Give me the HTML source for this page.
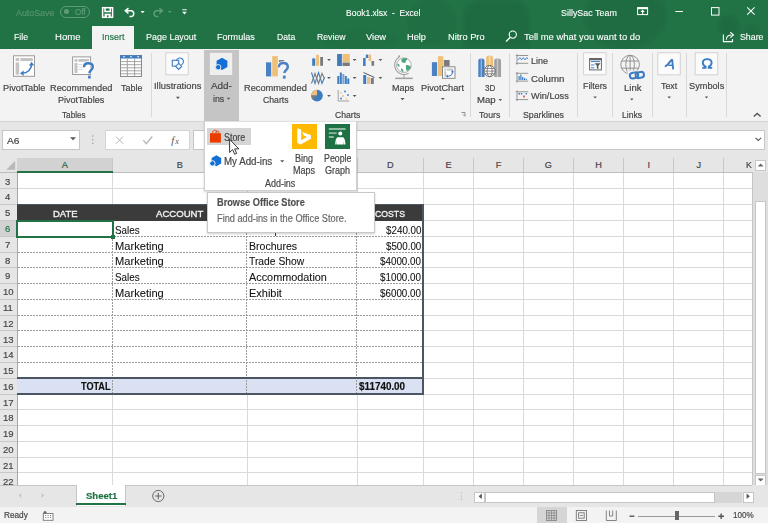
<!DOCTYPE html><html><head><meta charset="utf-8"><style>
html,body{margin:0;padding:0;width:768px;height:523px;overflow:hidden;background:#fff}
body>div,body>svg,body>span{position:absolute}
span{font-family:"Liberation Sans",sans-serif;line-height:1;white-space:pre;transform-origin:0 0;-webkit-text-stroke:0.18px currentColor}
</style></head><body>
<div style="left:0px;top:0px;width:768px;height:49px;background:#217346"></div>
<div style="left:0px;top:49px;width:768px;height:72px;background:#f3f3f3"></div>
<div style="left:0px;top:121px;width:768px;height:1px;background:#d4d4d4"></div>
<div style="left:0px;top:122px;width:768px;height:36px;background:#e6e6e6"></div>
<svg style="left:0;top:0" width="768" height="523" viewBox="0 0 768 523"><defs><filter id="bl" x="-50%" y="-50%" width="200%" height="200%"><feGaussianBlur stdDeviation="2"/></filter><clipPath id="tb"><rect x="0" y="0" width="768" height="49"/></clipPath></defs><g fill="#000" filter="url(#bl)" clip-path="url(#tb)"><path d="M463 49V20a18 18 0 0 1 18-20h32a18 18 0 0 1 17 20v29z" fill-opacity="0.065"/><ellipse cx="432" cy="22" rx="26" ry="24" fill-opacity="0.035"/><ellipse cx="625" cy="16" rx="42" ry="34" fill-opacity="0.06"/><circle cx="729" cy="26" r="11" fill-opacity="0.07"/><circle cx="752" cy="31" r="8" fill-opacity="0.05"/><ellipse cx="360" cy="40" rx="40" ry="12" fill-opacity="0.025"/></g></svg>
<div style="left:92px;top:26px;width:42px;height:23px;background:#f3f3f3"></div>
<span style="left:15.60px;top:8.78px;font-size:9px;font-weight:400;color:#57926f;transform:scaleX(0.9838)">AutoSave</span>
<div style="left:60px;top:5.5px;width:30px;height:12px;border:1px solid #5e9c79;border-radius:7px;box-sizing:border-box"></div>
<div style="left:64px;top:9px;width:5px;height:5px;background:#5e9c79;border-radius:50%"></div>
<span style="left:75.00px;top:8.30px;font-size:8.5px;font-weight:400;color:#5e9c79;transform:scaleX(0.9385)">Off</span>
<span style="left:345.50px;top:8.78px;font-size:9px;font-weight:400;color:#fff;-webkit-text-stroke:0.1px currentColor;transform:scaleX(0.9487)">Book1.xlsx  -  Excel</span>
<span style="left:561.40px;top:8.78px;font-size:9px;font-weight:400;color:#fff;-webkit-text-stroke:0.1px currentColor;transform:scaleX(0.9918)">SillySac Team</span>
<span style="left:13.50px;top:33.43px;font-size:9.3px;font-weight:400;color:#fff;-webkit-text-stroke:0.1px currentColor;transform:scaleX(0.9343)">File</span>
<span style="left:55.00px;top:33.43px;font-size:9.3px;font-weight:400;color:#fff;-webkit-text-stroke:0.1px currentColor;transform:scaleX(1.0277)">Home</span>
<span style="left:145.60px;top:33.43px;font-size:9.3px;font-weight:400;color:#fff;-webkit-text-stroke:0.1px currentColor;transform:scaleX(0.9633)">Page Layout</span>
<span style="left:217.20px;top:33.43px;font-size:9.3px;font-weight:400;color:#fff;-webkit-text-stroke:0.1px currentColor;transform:scaleX(0.9755)">Formulas</span>
<span style="left:276.60px;top:33.43px;font-size:9.3px;font-weight:400;color:#fff;-webkit-text-stroke:0.1px currentColor;transform:scaleX(0.9267)">Data</span>
<span style="left:316.50px;top:33.43px;font-size:9.3px;font-weight:400;color:#fff;-webkit-text-stroke:0.1px currentColor;transform:scaleX(0.9349)">Review</span>
<span style="left:365.90px;top:33.43px;font-size:9.3px;font-weight:400;color:#fff;-webkit-text-stroke:0.1px currentColor;transform:scaleX(1.0058)">View</span>
<span style="left:406.90px;top:33.43px;font-size:9.3px;font-weight:400;color:#fff;-webkit-text-stroke:0.1px currentColor;transform:scaleX(0.9882)">Help</span>
<span style="left:447.60px;top:33.43px;font-size:9.3px;font-weight:400;color:#fff;-webkit-text-stroke:0.1px currentColor;transform:scaleX(0.9976)">Nitro Pro</span>
<span style="left:523.70px;top:33.43px;font-size:9.3px;font-weight:400;color:#fff;-webkit-text-stroke:0.1px currentColor;transform:scaleX(1.0136)">Tell me what you want to do</span>
<span style="left:740.00px;top:33.43px;font-size:9.3px;font-weight:400;color:#fff;-webkit-text-stroke:0.1px currentColor;transform:scaleX(0.9471)">Share</span>
<span style="left:101.50px;top:33.43px;font-size:9.3px;font-weight:400;color:#217346;transform:scaleX(0.9671)">Insert</span>
<span style="left:2.75px;top:83.78px;font-size:9px;font-weight:400;color:#444;transform:scaleX(1.0221)">PivotTable</span>
<span style="left:49.60px;top:83.78px;font-size:9px;font-weight:400;color:#444;transform:scaleX(1.0224)">Recommended</span>
<span style="left:57.80px;top:96.18px;font-size:9px;font-weight:400;color:#444;transform:scaleX(1.0037)">PivotTables</span>
<span style="left:120.60px;top:83.78px;font-size:9px;font-weight:400;color:#444;transform:scaleX(0.9946)">Table</span>
<span style="left:61.70px;top:110.78px;font-size:9px;font-weight:400;color:#444;transform:scaleX(0.9110)">Tables</span>
<span style="left:153.60px;top:81.78px;font-size:9px;font-weight:400;color:#444;transform:scaleX(1.0410)">Illustrations</span>
<div style="left:204px;top:50px;width:34.5px;height:71px;background:#c5c5c5"></div>
<span style="left:210.60px;top:82.38px;font-size:9px;font-weight:400;color:#444;transform:scaleX(1.0991)">Add-</span>
<span style="left:212.50px;top:94.78px;font-size:9px;font-weight:400;color:#444;transform:scaleX(0.9813)">ins</span>
<span style="left:243.70px;top:83.78px;font-size:9px;font-weight:400;color:#444;transform:scaleX(1.0290)">Recommended</span>
<span style="left:262.70px;top:96.18px;font-size:9px;font-weight:400;color:#444;transform:scaleX(0.9617)">Charts</span>
<span style="left:335.00px;top:110.78px;font-size:9px;font-weight:400;color:#444;transform:scaleX(0.9579)">Charts</span>
<span style="left:391.50px;top:83.78px;font-size:9px;font-weight:400;color:#444;transform:scaleX(1.0038)">Maps</span>
<span style="left:420.90px;top:83.78px;font-size:9px;font-weight:400;color:#444;transform:scaleX(1.0230)">PivotChart</span>
<span style="left:484.70px;top:83.78px;font-size:9px;font-weight:400;color:#444;transform:scaleX(0.8944)">3D</span>
<span style="left:477.40px;top:96.18px;font-size:9px;font-weight:400;color:#444;transform:scaleX(1.0619)">Map</span>
<span style="left:478.75px;top:110.78px;font-size:9px;font-weight:400;color:#444;transform:scaleX(0.9652)">Tours</span>
<span style="left:530.80px;top:56.68px;font-size:9px;font-weight:400;color:#444;transform:scaleX(0.9991)">Line</span>
<span style="left:530.80px;top:74.88px;font-size:9px;font-weight:400;color:#444;transform:scaleX(1.0769)">Column</span>
<span style="left:530.80px;top:92.28px;font-size:9px;font-weight:400;color:#444;transform:scaleX(1.0212)">Win/Loss</span>
<span style="left:523.00px;top:110.78px;font-size:9px;font-weight:400;color:#444;transform:scaleX(0.9755)">Sparklines</span>
<span style="left:583.00px;top:81.78px;font-size:9px;font-weight:400;color:#444;transform:scaleX(0.9796)">Filters</span>
<span style="left:623.50px;top:83.78px;font-size:9px;font-weight:400;color:#444;transform:scaleX(1.0596)">Link</span>
<span style="left:622.20px;top:110.78px;font-size:9px;font-weight:400;color:#444;transform:scaleX(0.9517)">Links</span>
<span style="left:661.20px;top:81.78px;font-size:9px;font-weight:400;color:#444;transform:scaleX(0.9809)">Text</span>
<span style="left:689.00px;top:81.78px;font-size:9px;font-weight:400;color:#444;transform:scaleX(1.0213)">Symbols</span>
<div style="left:151px;top:53px;width:1px;height:64px;background:#d8d8d8"></div>
<div style="left:470px;top:53px;width:1px;height:64px;background:#d8d8d8"></div>
<div style="left:509px;top:53px;width:1px;height:64px;background:#d8d8d8"></div>
<div style="left:577px;top:53px;width:1px;height:64px;background:#d8d8d8"></div>
<div style="left:612px;top:53px;width:1px;height:64px;background:#d8d8d8"></div>
<div style="left:652px;top:53px;width:1px;height:64px;background:#d8d8d8"></div>
<div style="left:686px;top:53px;width:1px;height:64px;background:#d8d8d8"></div>
<div style="left:726px;top:53px;width:1px;height:64px;background:#d8d8d8"></div>
<div style="left:2px;top:130px;width:78px;height:20px;background:#fff;border:1px solid #c6c6c6;box-sizing:border-box"></div>
<span style="left:7.00px;top:135.76px;font-size:9.5px;font-weight:400;color:#444;transform:scaleX(1.0753)">A6</span>
<div style="left:105px;top:130px;width:85px;height:20px;background:#fff;border:1px solid #d4d4d4;box-sizing:border-box"></div>
<div style="left:193px;top:130px;width:571.5px;height:20px;background:#fff;border:1px solid #c6c6c6;box-sizing:border-box"></div>
<div style="left:0px;top:158px;width:768px;height:15px;background:#e6e6e6"></div>
<div style="left:17px;top:158px;width:95.5px;height:14px;background:#d2d2d2"></div>
<div style="left:0px;top:173px;width:17px;height:312px;background:#e6e6e6"></div>
<div style="left:0px;top:220px;width:17px;height:17px;background:#d2d2d2"></div>
<div style="left:17px;top:173px;width:735px;height:312px;background:#fff"></div>
<div style="left:112px;top:173px;width:1px;height:312px;background:#dadada"></div>
<div style="left:112px;top:158px;width:1px;height:14px;background:#c8c8c8"></div>
<div style="left:247px;top:173px;width:1px;height:312px;background:#dadada"></div>
<div style="left:247px;top:158px;width:1px;height:14px;background:#c8c8c8"></div>
<div style="left:357px;top:173px;width:1px;height:312px;background:#dadada"></div>
<div style="left:357px;top:158px;width:1px;height:14px;background:#c8c8c8"></div>
<div style="left:423px;top:173px;width:1px;height:312px;background:#dadada"></div>
<div style="left:423px;top:158px;width:1px;height:14px;background:#c8c8c8"></div>
<div style="left:473px;top:173px;width:1px;height:312px;background:#dadada"></div>
<div style="left:473px;top:158px;width:1px;height:14px;background:#c8c8c8"></div>
<div style="left:523px;top:173px;width:1px;height:312px;background:#dadada"></div>
<div style="left:523px;top:158px;width:1px;height:14px;background:#c8c8c8"></div>
<div style="left:573px;top:173px;width:1px;height:312px;background:#dadada"></div>
<div style="left:573px;top:158px;width:1px;height:14px;background:#c8c8c8"></div>
<div style="left:623px;top:173px;width:1px;height:312px;background:#dadada"></div>
<div style="left:623px;top:158px;width:1px;height:14px;background:#c8c8c8"></div>
<div style="left:673px;top:173px;width:1px;height:312px;background:#dadada"></div>
<div style="left:673px;top:158px;width:1px;height:14px;background:#c8c8c8"></div>
<div style="left:723px;top:173px;width:1px;height:312px;background:#dadada"></div>
<div style="left:723px;top:158px;width:1px;height:14px;background:#c8c8c8"></div>
<div style="left:752px;top:172px;width:1px;height:313px;background:#c6c6c6"></div>
<div style="left:17px;top:188px;width:735px;height:1px;background:#dadada"></div>
<div style="left:0px;top:188px;width:17px;height:1px;background:#c8c8c8"></div>
<div style="left:17px;top:204px;width:735px;height:1px;background:#dadada"></div>
<div style="left:0px;top:204px;width:17px;height:1px;background:#c8c8c8"></div>
<div style="left:17px;top:220px;width:735px;height:1px;background:#dadada"></div>
<div style="left:0px;top:220px;width:17px;height:1px;background:#c8c8c8"></div>
<div style="left:17px;top:236px;width:735px;height:1px;background:#dadada"></div>
<div style="left:0px;top:236px;width:17px;height:1px;background:#c8c8c8"></div>
<div style="left:17px;top:252px;width:735px;height:1px;background:#dadada"></div>
<div style="left:0px;top:252px;width:17px;height:1px;background:#c8c8c8"></div>
<div style="left:17px;top:267px;width:735px;height:1px;background:#dadada"></div>
<div style="left:0px;top:267px;width:17px;height:1px;background:#c8c8c8"></div>
<div style="left:17px;top:283px;width:735px;height:1px;background:#dadada"></div>
<div style="left:0px;top:283px;width:17px;height:1px;background:#c8c8c8"></div>
<div style="left:17px;top:299px;width:735px;height:1px;background:#dadada"></div>
<div style="left:0px;top:299px;width:17px;height:1px;background:#c8c8c8"></div>
<div style="left:17px;top:315px;width:735px;height:1px;background:#dadada"></div>
<div style="left:0px;top:315px;width:17px;height:1px;background:#c8c8c8"></div>
<div style="left:17px;top:330px;width:735px;height:1px;background:#dadada"></div>
<div style="left:0px;top:330px;width:17px;height:1px;background:#c8c8c8"></div>
<div style="left:17px;top:346px;width:735px;height:1px;background:#dadada"></div>
<div style="left:0px;top:346px;width:17px;height:1px;background:#c8c8c8"></div>
<div style="left:17px;top:362px;width:735px;height:1px;background:#dadada"></div>
<div style="left:0px;top:362px;width:17px;height:1px;background:#c8c8c8"></div>
<div style="left:17px;top:378px;width:735px;height:1px;background:#dadada"></div>
<div style="left:0px;top:378px;width:17px;height:1px;background:#c8c8c8"></div>
<div style="left:17px;top:394px;width:735px;height:1px;background:#dadada"></div>
<div style="left:0px;top:394px;width:17px;height:1px;background:#c8c8c8"></div>
<div style="left:17px;top:409px;width:735px;height:1px;background:#dadada"></div>
<div style="left:0px;top:409px;width:17px;height:1px;background:#c8c8c8"></div>
<div style="left:17px;top:425px;width:735px;height:1px;background:#dadada"></div>
<div style="left:0px;top:425px;width:17px;height:1px;background:#c8c8c8"></div>
<div style="left:17px;top:441px;width:735px;height:1px;background:#dadada"></div>
<div style="left:0px;top:441px;width:17px;height:1px;background:#c8c8c8"></div>
<div style="left:17px;top:457px;width:735px;height:1px;background:#dadada"></div>
<div style="left:0px;top:457px;width:17px;height:1px;background:#c8c8c8"></div>
<div style="left:17px;top:472px;width:735px;height:1px;background:#dadada"></div>
<div style="left:0px;top:472px;width:17px;height:1px;background:#c8c8c8"></div>
<div style="left:0px;top:172px;width:752px;height:1px;background:#bdbdbd"></div>
<div style="left:17px;top:171px;width:95.5px;height:2px;background:#217346"></div>
<div style="left:17px;top:173px;width:1px;height:312px;background:#a9a9a9"></div>
<span style="left:61.68px;top:161.11px;font-size:9.2px;font-weight:400;color:#1d5f3b;transform:scaleX(1.0000)">A</span>
<span style="left:176.68px;top:161.11px;font-size:9.2px;font-weight:400;color:#444;transform:scaleX(1.0000)">B</span>
<span style="left:386.88px;top:161.11px;font-size:9.2px;font-weight:400;color:#444;transform:scaleX(1.0000)">D</span>
<span style="left:445.38px;top:161.11px;font-size:9.2px;font-weight:400;color:#444;transform:scaleX(1.0000)">E</span>
<span style="left:495.64px;top:161.11px;font-size:9.2px;font-weight:400;color:#444;transform:scaleX(1.0000)">F</span>
<span style="left:544.87px;top:161.11px;font-size:9.2px;font-weight:400;color:#444;transform:scaleX(1.0000)">G</span>
<span style="left:595.23px;top:161.11px;font-size:9.2px;font-weight:400;color:#444;transform:scaleX(1.0000)">H</span>
<span style="left:647.42px;top:161.11px;font-size:9.2px;font-weight:400;color:#444;transform:scaleX(1.0000)">I</span>
<span style="left:696.55px;top:161.11px;font-size:9.2px;font-weight:400;color:#444;transform:scaleX(1.0000)">J</span>
<span style="left:745.70px;top:161.11px;font-size:9.2px;font-weight:400;color:#444;transform:scaleX(0.9445)">K</span>
<span style="left:4.96px;top:176.70px;font-size:9.8px;font-weight:400;color:#444;transform:scaleX(0.9700)">3</span>
<span style="left:4.96px;top:192.48px;font-size:9.8px;font-weight:400;color:#444;transform:scaleX(0.9700)">4</span>
<span style="left:4.96px;top:208.26px;font-size:9.8px;font-weight:400;color:#444;transform:scaleX(0.9700)">5</span>
<span style="left:4.96px;top:224.04px;font-size:9.8px;font-weight:400;color:#217346;transform:scaleX(0.9700)">6</span>
<span style="left:4.96px;top:239.82px;font-size:9.8px;font-weight:400;color:#444;transform:scaleX(0.9700)">7</span>
<span style="left:4.96px;top:255.60px;font-size:9.8px;font-weight:400;color:#444;transform:scaleX(0.9700)">8</span>
<span style="left:4.96px;top:271.38px;font-size:9.8px;font-weight:400;color:#444;transform:scaleX(0.9700)">9</span>
<span style="left:2.71px;top:287.16px;font-size:9.8px;font-weight:400;color:#444;transform:scaleX(0.9700)">10</span>
<span style="left:3.07px;top:302.94px;font-size:9.8px;font-weight:400;color:#444;transform:scaleX(0.9700)">11</span>
<span style="left:2.71px;top:318.72px;font-size:9.8px;font-weight:400;color:#444;transform:scaleX(0.9700)">12</span>
<span style="left:2.71px;top:334.50px;font-size:9.8px;font-weight:400;color:#444;transform:scaleX(0.9700)">13</span>
<span style="left:2.71px;top:350.28px;font-size:9.8px;font-weight:400;color:#444;transform:scaleX(0.9700)">14</span>
<span style="left:2.71px;top:366.06px;font-size:9.8px;font-weight:400;color:#444;transform:scaleX(0.9700)">15</span>
<span style="left:2.71px;top:381.84px;font-size:9.8px;font-weight:400;color:#444;transform:scaleX(0.9700)">16</span>
<span style="left:2.71px;top:397.62px;font-size:9.8px;font-weight:400;color:#444;transform:scaleX(0.9700)">17</span>
<span style="left:2.71px;top:413.40px;font-size:9.8px;font-weight:400;color:#444;transform:scaleX(0.9700)">18</span>
<span style="left:2.71px;top:429.18px;font-size:9.8px;font-weight:400;color:#444;transform:scaleX(0.9700)">19</span>
<span style="left:2.71px;top:444.96px;font-size:9.8px;font-weight:400;color:#444;transform:scaleX(0.9700)">20</span>
<span style="left:2.71px;top:460.74px;font-size:9.8px;font-weight:400;color:#444;transform:scaleX(0.9700)">21</span>
<span style="left:2.71px;top:476.52px;font-size:9.8px;font-weight:400;color:#444;transform:scaleX(0.9700)">22</span>
<div style="left:17px;top:204px;width:406px;height:17px;background:#3b3b3b"></div>
<div style="left:17px;top:204px;width:406px;height:1px;background:#4b5563"></div>
<div style="left:18px;top:221px;width:405px;height:157px;background:#fff"></div>
<div style="left:17px;top:378px;width:406px;height:16px;background:#d9e1f2"></div>
<div style="left:18px;top:236px;width:405px;height:1px;background:repeating-linear-gradient(90deg,#9a9a9a 0 2px,transparent 2px 3px)"></div>
<div style="left:18px;top:252px;width:405px;height:1px;background:repeating-linear-gradient(90deg,#9a9a9a 0 2px,transparent 2px 3px)"></div>
<div style="left:18px;top:267px;width:405px;height:1px;background:repeating-linear-gradient(90deg,#9a9a9a 0 2px,transparent 2px 3px)"></div>
<div style="left:18px;top:283px;width:405px;height:1px;background:repeating-linear-gradient(90deg,#9a9a9a 0 2px,transparent 2px 3px)"></div>
<div style="left:18px;top:299px;width:405px;height:1px;background:repeating-linear-gradient(90deg,#9a9a9a 0 2px,transparent 2px 3px)"></div>
<div style="left:18px;top:315px;width:405px;height:1px;background:repeating-linear-gradient(90deg,#9a9a9a 0 2px,transparent 2px 3px)"></div>
<div style="left:18px;top:330px;width:405px;height:1px;background:repeating-linear-gradient(90deg,#9a9a9a 0 2px,transparent 2px 3px)"></div>
<div style="left:18px;top:346px;width:405px;height:1px;background:repeating-linear-gradient(90deg,#9a9a9a 0 2px,transparent 2px 3px)"></div>
<div style="left:18px;top:362px;width:405px;height:1px;background:repeating-linear-gradient(90deg,#9a9a9a 0 2px,transparent 2px 3px)"></div>
<div style="left:112px;top:221px;width:1px;height:173px;background:repeating-linear-gradient(180deg,#9a9a9a 0 2px,transparent 2px 3px)"></div>
<div style="left:246px;top:221px;width:1px;height:173px;background:repeating-linear-gradient(180deg,#9a9a9a 0 2px,transparent 2px 3px)"></div>
<div style="left:356px;top:221px;width:1px;height:173px;background:repeating-linear-gradient(180deg,#9a9a9a 0 2px,transparent 2px 3px)"></div>
<div style="left:17px;top:377px;width:407px;height:2px;background:#4b5563"></div>
<div style="left:17px;top:393px;width:407px;height:2px;background:#4b5563"></div>
<div style="left:422px;top:204px;width:2px;height:191px;background:#4b5563"></div>
<span style="left:53.40px;top:209.37px;font-size:9.6px;font-weight:400;color:#f2f2f2;-webkit-text-stroke:0.35px currentColor;transform:scaleX(0.9889)">DATE</span>
<span style="left:156.10px;top:209.37px;font-size:9.6px;font-weight:400;color:#f2f2f2;-webkit-text-stroke:0.35px currentColor;transform:scaleX(0.9992)">ACCOUNT</span>
<span style="left:375.20px;top:209.37px;font-size:9.6px;font-weight:400;color:#f2f2f2;-webkit-text-stroke:0.35px currentColor;transform:scaleX(0.9074)">COSTS</span>
<span style="left:114.90px;top:224.85px;font-size:10.5px;font-weight:400;color:#111;-webkit-text-stroke:0.08px currentColor;transform:scaleX(0.9404)">Sales</span>
<span style="left:385.70px;top:224.85px;font-size:10.5px;font-weight:400;color:#111;-webkit-text-stroke:0.08px currentColor;transform:scaleX(0.9350)">$240.00</span>
<span style="left:114.90px;top:240.63px;font-size:10.5px;font-weight:400;color:#111;-webkit-text-stroke:0.08px currentColor;transform:scaleX(1.0584)">Marketing</span>
<span style="left:248.60px;top:240.63px;font-size:10.5px;font-weight:400;color:#111;-webkit-text-stroke:0.08px currentColor;transform:scaleX(1.0050)">Brochures</span>
<span style="left:385.90px;top:240.63px;font-size:10.5px;font-weight:400;color:#111;-webkit-text-stroke:0.08px currentColor;transform:scaleX(0.9297)">$500.00</span>
<span style="left:114.90px;top:256.41px;font-size:10.5px;font-weight:400;color:#111;-webkit-text-stroke:0.08px currentColor;transform:scaleX(1.0584)">Marketing</span>
<span style="left:248.60px;top:256.41px;font-size:10.5px;font-weight:400;color:#111;-webkit-text-stroke:0.08px currentColor;transform:scaleX(0.9816)">Trade Show</span>
<span style="left:380.20px;top:256.41px;font-size:10.5px;font-weight:400;color:#111;-webkit-text-stroke:0.08px currentColor;transform:scaleX(0.9361)">$4000.00</span>
<span style="left:114.90px;top:272.19px;font-size:10.5px;font-weight:400;color:#111;-webkit-text-stroke:0.08px currentColor;transform:scaleX(0.9404)">Sales</span>
<span style="left:248.60px;top:272.19px;font-size:10.5px;font-weight:400;color:#111;-webkit-text-stroke:0.08px currentColor;transform:scaleX(1.0346)">Accommodation</span>
<span style="left:380.20px;top:272.19px;font-size:10.5px;font-weight:400;color:#111;-webkit-text-stroke:0.08px currentColor;transform:scaleX(0.9361)">$1000.00</span>
<span style="left:114.90px;top:287.97px;font-size:10.5px;font-weight:400;color:#111;-webkit-text-stroke:0.08px currentColor;transform:scaleX(1.0584)">Marketing</span>
<span style="left:248.60px;top:287.97px;font-size:10.5px;font-weight:400;color:#111;-webkit-text-stroke:0.08px currentColor;transform:scaleX(1.0439)">Exhibit</span>
<span style="left:380.20px;top:287.97px;font-size:10.5px;font-weight:400;color:#111;-webkit-text-stroke:0.08px currentColor;transform:scaleX(0.9361)">$6000.00</span>
<span style="left:80.80px;top:381.41px;font-size:10.5px;font-weight:700;color:#111;transform:scaleX(0.8669)">TOTAL</span>
<span style="left:358.70px;top:381.41px;font-size:10.5px;font-weight:700;color:#111;transform:scaleX(0.9396)">$11740.00</span>
<div style="left:16px;top:220px;width:98px;height:18px;border:2px solid #217346;box-sizing:border-box"></div>
<div style="left:110.6px;top:234.8px;width:4.4px;height:4.4px;background:#217346"></div>
<div style="left:753px;top:172px;width:15px;height:313px;background:#dedede"></div>
<div style="left:755px;top:159.5px;width:11px;height:11px;background:#fff;border:1px solid #c6c6c6;box-sizing:border-box"></div>
<div style="left:755px;top:200.5px;width:11px;height:273.5px;background:#fff;border:1px solid #c6c6c6;box-sizing:border-box"></div>
<div style="left:755px;top:475px;width:11px;height:10.5px;background:#fff;border:1px solid #c6c6c6;box-sizing:border-box"></div>
<div style="left:0px;top:485px;width:768px;height:22px;background:#e6e6e6"></div>
<div style="left:0px;top:485px;width:752px;height:1px;background:#c6c6c6"></div>
<div style="left:76px;top:485px;width:50px;height:21px;background:#fff;border-left:1px solid #c6c6c6;border-right:1px solid #c6c6c6;box-sizing:border-box"></div>
<div style="left:76px;top:503px;width:50px;height:2px;background:#217346"></div>
<span style="left:85.50px;top:491.30px;font-size:9.8px;font-weight:700;color:#217346;transform:scaleX(0.9738)">Sheet1</span>
<div style="left:474px;top:491.5px;width:11px;height:11px;background:#fff;border:1px solid #c6c6c6;box-sizing:border-box"></div>
<div style="left:485px;top:492px;width:230px;height:10.5px;background:#fff;border:1px solid #c6c6c6;box-sizing:border-box"></div>
<div style="left:715px;top:492px;width:27px;height:10.5px;background:#d6d6d6"></div>
<div style="left:742.5px;top:491.5px;width:11px;height:11px;background:#fff;border:1px solid #c6c6c6;box-sizing:border-box"></div>
<div style="left:0px;top:507px;width:768px;height:16px;background:#f3f3f3"></div>
<span style="left:4.20px;top:510.98px;font-size:9px;font-weight:400;color:#444;transform:scaleX(0.9148)">Ready</span>
<div style="left:537px;top:507px;width:30px;height:16px;background:#d5d5d5"></div>
<div style="left:638px;top:516px;width:77px;height:1px;background:#999"></div>
<div style="left:675px;top:511.3px;width:4px;height:8.5px;background:#666"></div>
<span style="left:733.20px;top:510.98px;font-size:9px;font-weight:400;color:#444;transform:scaleX(0.8988)">100%</span>
<div style="left:204px;top:120.5px;width:153.3px;height:70px;background:#fff;border:1px solid #cfcfcf;border-top-color:#e0e0e0;box-sizing:border-box;box-shadow:0 1px 2px rgba(0,0,0,.18)"></div>
<div style="left:207px;top:128.2px;width:43.7px;height:17.2px;background:#d5d5d5"></div>
<span style="left:223.90px;top:132.73px;font-size:10px;font-weight:400;color:#444;transform:scaleX(0.8868)">Store</span>
<span style="left:224.30px;top:156.53px;font-size:10px;font-weight:400;color:#444;transform:scaleX(0.9744)">My Add-ins</span>
<div style="left:292px;top:124px;width:25px;height:25px;background:#ffb900"></div>
<div style="left:324.7px;top:124px;width:25px;height:25px;background:#1e7145"></div>
<span style="left:295.39px;top:153.53px;font-size:10px;font-weight:400;color:#444;transform:scaleX(0.9000)">Bing</span>
<span style="left:293.40px;top:165.53px;font-size:10px;font-weight:400;color:#444;transform:scaleX(0.9000)">Maps</span>
<span style="left:323.50px;top:153.53px;font-size:10px;font-weight:400;color:#444;transform:scaleX(0.8831)">People</span>
<span style="left:324.69px;top:165.53px;font-size:10px;font-weight:400;color:#444;transform:scaleX(0.9000)">Graph</span>
<span style="left:264.70px;top:179.03px;font-size:10px;font-weight:400;color:#444;transform:scaleX(0.8936)">Add-ins</span>
<svg style="left:0;top:0" width="768" height="523" viewBox="0 0 768 523"><path d="M210 133.2h10.9v9.4h-10.9z" fill="#eb3c00"/>
<path d="M212.6 133.2c0-2.2 1-3 2.2-3s2.2 0.8 2.2 3M215.6 133.2c0-1.6 0.8-2.3 1.8-2.3s1.8 0.7 1.8 2.3" fill="none" stroke="#eb3c00" stroke-width="0.9"/>
<path d="M216.4 155.3l4.8 2.75v5.5l-4.8 2.75-4.8-2.75v-5.5z" fill="#1570d5"/>
<circle cx="212.4" cy="163.4" r="2.7" fill="#1570d5" stroke="#fff" stroke-width="0.9"/>
<path d="M280.2 160.2h4l-2 2.2z" fill="#555"/>
<path d="M297.3 128.2l3.9 1.3v10.8l5.8-3.2-3.3-1.6-1.4-3.4 8.7 3.2v3.4l-10.5 5.9-3.2-1.7z" fill="#fff"/>
<path d="M328.8 129h16.8M328.8 133.1h7.8M328.8 137h5" stroke="#fff" stroke-opacity="0.5" stroke-width="1.8"/>
<circle cx="340.3" cy="133.6" r="2" fill="#fff"/>
<path d="M335.2 144.6c0-3.5 0.6-6.3 2.2-7.4h5.8c1.6 1.1 2.2 3.9 2.2 7.4h-1.4l-0.4-3.5v3.5h-6.6v-3.5l-0.4 3.5z" fill="#fff"/>
</svg>
<div style="left:207.4px;top:191.5px;width:167.2px;height:41.2px;background:#fff;border:1px solid #c8c8c8;box-sizing:border-box;box-shadow:0 1px 2px rgba(0,0,0,.2)"></div>
<div style="left:274.8px;top:233px;width:1.4px;height:2.7px;background:#333"></div>
<span style="left:216.80px;top:197.84px;font-size:10px;font-weight:700;color:#505050;transform:scaleX(0.9185)">Browse Office Store</span>
<span style="left:216.80px;top:214.03px;font-size:10px;font-weight:400;color:#666;transform:scaleX(0.9217)">Find add-ins in the Office Store.</span>
<svg style="left:0;top:0" width="768" height="523" viewBox="0 0 768 523">
<g fill="none" stroke="#fff" stroke-width="1.5">
 <rect x="102.6" y="7.7" width="10" height="9.6"/>
 <path d="M105 7.7v3.9h5.3v-3.9"/>
</g>
<path d="M104.6 17.3v-3.6h6.1v3.6z" fill="#fff"/>
<rect x="106.9" y="15.3" width="1.6" height="2" fill="#217346"/>
<path d="M128.5 8.2 L125.3 10.8 L128.5 13.5 M125.6 10.8 H131.5 A3 3 0 0 1 131.5 16.6 H129.5" fill="none" stroke="#fff" stroke-width="1.5"/>
<path d="M140.6 11.1h4.1l-2.05 2.1z" fill="#fff"/>
<path d="M159.3 8.2 L162.5 10.8 L159.3 13.5 M162.2 10.8 H156.3 A3 3 0 0 0 156.3 16.6 H158.3" fill="none" stroke="#5e9c79" stroke-width="1.5"/>
<path d="M167.9 11.1h3.9l-1.95 2z" fill="#5e9c79"/>
<rect x="182.2" y="9.3" width="4.6" height="0.9" fill="#fff"/>
<path d="M182.2 11.8h4.6l-2.3 2.8z" fill="#fff"/>
<rect x="637.6" y="7.6" width="10" height="7" fill="none" stroke="#fff" stroke-width="1"/>
<rect x="637.6" y="7.6" width="10" height="1.6" fill="#fff"/>
<path d="M642.6 9.5l-2.2 2.4h1.6v2.6h1.2v-2.6h1.6z" fill="#fff"/>
<rect x="675.3" y="11" width="7.6" height="1" fill="#fff"/>
<rect x="711.5" y="7.6" width="7.5" height="7.5" fill="none" stroke="#fff" stroke-width="1"/>
<path d="M747.2 7.3l7.4 7.4M754.6 7.3l-7.4 7.4" stroke="#fff" stroke-width="1.05"/>
<circle cx="512.8" cy="34.6" r="3.6" fill="none" stroke="#fff" stroke-width="1.1"/>
<path d="M510.3 37.3L506.1 41.5" stroke="#fff" stroke-width="1.3"/>
<path d="M723.4 34.5v7.1h9.1v-2.7" fill="none" stroke="#fff" stroke-width="1.1"/>
<path d="M726.3 39.6c0.2-3 2.2-4.6 5.3-4.6" fill="none" stroke="#fff" stroke-width="1.1"/>
<path d="M730.3 32.2l3.2 2.8l-3.2 2.6" fill="none" stroke="#fff" stroke-width="1.1"/>
</svg>
<svg style="left:0;top:0" width="768" height="523" viewBox="0 0 768 523"><rect x="13.5" y="55.8" width="21" height="20.5" fill="#fff" stroke="#9a9a9a" stroke-width="1"/>
<rect x="15.6" y="58" width="3.6" height="3.1" fill="#c4c4c4"/><rect x="20.4" y="58" width="12.4" height="3.1" fill="#c4c4c4"/>
<rect x="15.6" y="62.4" width="3.6" height="12.2" fill="#c4c4c4"/>
<path d="M22.2 73.2c5.2 0 9.2-3.6 9.4-8.8" fill="none" stroke="#3e7cc2" stroke-width="1.5"/>
<path d="M28.9 65.4l2.7-3.6 2.6 3.6z M23.6 70.5l-3.6 2.7 3.6 2.7z" fill="#3e7cc2"/><rect x="72.6" y="56.9" width="18" height="17.6" fill="#fff" stroke="#9a9a9a" stroke-width="1"/>
<rect x="74.5" y="59" width="3" height="2.8" fill="#c4c4c4"/><rect x="78.5" y="59" width="10.5" height="2.8" fill="#c4c4c4"/>
<rect x="74.5" y="63" width="3" height="10" fill="#c4c4c4"/>
<path d="M78.5 64.5h6M78.5 67h4M78.5 69.5h4" stroke="#d8d8d8" stroke-width="1"/>
<path d="M84 67.3c0-2.6 1.7-4.1 4.4-4.1c2.7 0 4.4 1.6 4.4 3.8c0 3.1-3.4 3.3-3.4 6.2" fill="none" stroke="#fff" stroke-width="3.8"/>
<path d="M84 67.3c0-2.6 1.7-4.1 4.4-4.1c2.7 0 4.4 1.6 4.4 3.8c0 3.1-3.4 3.3-3.4 6.2" fill="none" stroke="#3e7cc2" stroke-width="2.4"/>
<rect x="88.1" y="75.6" width="2.6" height="2.9" fill="#3e7cc2"/><rect x="120.5" y="55.5" width="21" height="21" fill="#fff" stroke="#8a8a8a" stroke-width="1"/><rect x="120" y="55.3" width="22" height="3.2" fill="#3e7cc2"/><path d="M120.5 61.6h21" stroke="#9a9a9a" stroke-width="0.9"/><path d="M120.5 64.7h21" stroke="#9a9a9a" stroke-width="0.9"/><path d="M120.5 67.8h21" stroke="#9a9a9a" stroke-width="0.9"/><path d="M120.5 70.8h21" stroke="#9a9a9a" stroke-width="0.9"/><path d="M120.5 73.8h21" stroke="#9a9a9a" stroke-width="0.9"/><path d="M127.3 58.5v18" stroke="#9a9a9a" stroke-width="0.9"/><path d="M134.6 58.5v18" stroke="#9a9a9a" stroke-width="0.9"/><path d="M122.7 56.2h2.4l-1.2 1.5z" fill="#fff"/><path d="M129.8 56.2h2.4l-1.2 1.5z" fill="#fff"/><path d="M137.0 56.2h2.4l-1.2 1.5z" fill="#fff"/><rect x="165.8" y="52.8" width="22.5" height="22" fill="#fbfbfb" stroke="#d2d2d2" stroke-width="1"/>
<rect x="172.3" y="60.3" width="6.4" height="5.8" fill="none" stroke="#3e7cc2" stroke-width="1.1"/>
<path d="M176.5 60.3a3.6 3.6 0 1 1 4.8 4.6" fill="none" stroke="#3e7cc2" stroke-width="1.1"/>
<path d="M178.7 63.4l3 3-3 3-3-3z" fill="#fbfbfb" stroke="#3e7cc2" stroke-width="1.1"/><path d="M175.9 96.80000000000001h4l-2.0 2.2z" fill="#555"/><rect x="209.9" y="52.9" width="22.3" height="22.1" fill="#efefef"/>
<path d="M222 57.8l5.4 3v6.2l-5.4 3.1-5.4-3.1v-6.2z" fill="#1570d5"/>
<circle cx="218.2" cy="67.2" r="2.7" fill="#1570d5" stroke="#efefef" stroke-width="0.9"/><path d="M226.7 97.8h3.6l-1.8 2z" fill="#555"/><rect x="266" y="62.3" width="5.2" height="14.1" fill="#4a80c4"/>
<rect x="272.2" y="56.1" width="5.7" height="20.3" fill="#eec07a"/>
<rect x="279" y="60" width="5.1" height="2.4" fill="#7b7b7b"/>
<path d="M278.8 67.2c0-2.6 1.8-4.2 4.5-4.2c2.8 0 4.5 1.6 4.5 3.9c0 3.1-3.4 3.4-3.4 6.2" fill="none" stroke="#f3f3f3" stroke-width="4"/>
<path d="M278.8 67.2c0-2.6 1.8-4.2 4.5-4.2c2.8 0 4.5 1.6 4.5 3.9c0 3.1-3.4 3.4-3.4 6.2" fill="none" stroke="#4a80c4" stroke-width="2.5"/>
<rect x="282.9" y="75.6" width="2.7" height="3" fill="#4a80c4"/><rect x="312.2" y="58.4" width="3" height="7.4" fill="#3e7cc2"/><rect x="316.1" y="54.8" width="2.9" height="11" fill="#eec07a"/><rect x="320.2" y="57" width="2.8" height="8.8" fill="#7b7b7b"/>
<rect x="337.1" y="54" width="4.8" height="12" fill="#3e7cc2"/><rect x="342.5" y="54" width="7.3" height="8" fill="#eec07a"/><rect x="342.5" y="62.5" width="7.3" height="3.5" fill="#7b7b7b"/>
<rect x="363.1" y="58" width="2.5" height="8" fill="#3e7cc2"/><rect x="365.8" y="54.6" width="2.5" height="3.4" fill="#3e7cc2"/><rect x="368.6" y="54.6" width="2.6" height="6.4" fill="#eec07a"/><rect x="371.5" y="61" width="2.6" height="4.8" fill="#7b7b7b"/>
<path d="M311.5 72.5l3.5 11 3.5-11 3.5 11 2.5-6" fill="none" stroke="#3e7cc2" stroke-width="1.1"/>
<path d="M311.5 83.5l3.5-10 3.5 10 3.5-10 2.5 5" fill="none" stroke="#7b7b7b" stroke-width="1.1"/>
<rect x="337.3" y="76" width="2" height="8" fill="#3e7cc2"/><rect x="339.8" y="72.5" width="2" height="11.5" fill="#3e7cc2"/><rect x="342.3" y="74" width="2" height="10" fill="#7aa3d6"/><rect x="344.8" y="76" width="2" height="8" fill="#3e7cc2"/><rect x="347.3" y="78.5" width="2" height="5.5" fill="#3e7cc2"/>
<rect x="363.2" y="75" width="3" height="9" fill="#3e7cc2"/><rect x="367" y="77" width="3" height="7" fill="#eec07a"/><rect x="370.8" y="78" width="3" height="6" fill="#7b7b7b"/>
<path d="M363.5 72.5l11 5" stroke="#555" stroke-width="1"/>
<circle cx="317" cy="95.6" r="5.8" fill="#3e7cc2"/>
<path d="M317 95.6V89.8A5.8 5.8 0 0 0 311.2 95.6z" fill="#eec07a"/>
<path d="M317 95.6H311.2A5.8 5.8 0 0 0 312.9 99.7z" fill="#7b7b7b"/>
<path d="M338.2 90v11h11" fill="none" stroke="#999" stroke-width="0.9"/>
<circle cx="341" cy="93" r="0.8" fill="#eec07a"/><circle cx="345" cy="91.5" r="0.9" fill="#3e7cc2"/><circle cx="343" cy="96" r="0.9" fill="#eec07a"/><circle cx="348" cy="95" r="0.9" fill="#3e7cc2"/><circle cx="341" cy="98.5" r="0.9" fill="#3e7cc2"/><circle cx="346.5" cy="99" r="0.8" fill="#eec07a"/><path d="M327.1 59.0h3.8l-1.9 2z" fill="#555"/><path d="M352.70000000000005 59.0h3.8l-1.9 2z" fill="#555"/><path d="M378.5 59.0h3.8l-1.9 2z" fill="#555"/><path d="M327.1 77.0h3.8l-1.9 2z" fill="#555"/><path d="M352.70000000000005 77.0h3.8l-1.9 2z" fill="#555"/><path d="M378.5 77.0h3.8l-1.9 2z" fill="#555"/><path d="M327.1 95.0h3.8l-1.9 2z" fill="#555"/><path d="M352.70000000000005 95.0h3.8l-1.9 2z" fill="#555"/><circle cx="403.9" cy="65.2" r="7.3" fill="#fff" stroke="#a0a0a0" stroke-width="0.8"/>
<path d="M401.5 59.2c1.8-1.3 4.2-1.6 5.8-0.8c-0.3 1.8-2 2.2-1.6 3.9c-1.2 1.3-3.3 0.3-4.4-1.1z M406.2 65c1.8 0 3.9 0.5 4.9 1.9c-0.9 2.8-3.1 3.9-4.6 3.9c-0.2-1.9-1.3-3.4-0.3-5.8z M397.4 63.5c1.3 0 2.7 1.4 2.1 3.2c-1.4 0-2.5-1.4-2.1-3.2z M401 68.5c1.5 0.2 2.7 1.5 2.5 3.6c-1.7-0.1-2.9-1.6-2.5-3.6z" fill="#4fa57f"/>
<path d="M399.25 57.1A9.3 9.3 0 0 0 408.55 73.25" fill="none" stroke="#a0a0a0" stroke-width="1.1"/>
<circle cx="399.2" cy="56.2" r="1" fill="#a0a0a0"/>
<path d="M404 74.4v3.4" stroke="#a0a0a0" stroke-width="1.1"/>
<rect x="395.2" y="77.6" width="17.6" height="1.5" fill="#a0a0a0"/><path d="M400.5 98.10000000000001h4l-2.0 2.2z" fill="#555"/><rect x="431.9" y="62.2" width="5.2" height="13.8" fill="#4a80c4"/>
<rect x="437.9" y="56.2" width="5.4" height="19.8" fill="#eec07a"/>
<rect x="443.9" y="60" width="5.7" height="6" fill="#7b7b7b"/>
<rect x="442.5" y="66.8" width="12.5" height="11.5" fill="#fff" stroke="#888" stroke-width="1"/>
<rect x="444.3" y="68.6" width="2" height="2" fill="#c4c4c4"/><rect x="447" y="68.6" width="6.3" height="2" fill="#c4c4c4"/><rect x="444.3" y="71.3" width="2" height="5.5" fill="#c4c4c4"/>
<path d="M447.6 76.2c2.6 0 4.9-1.7 4.9-4.5" fill="none" stroke="#3e7cc2" stroke-width="1.1"/><path d="M450.9 72.2l1.6-2.2 1.6 2.2z M448 74.6l-2.2 1.6 2.2 1.6z" fill="#3e7cc2"/><path d="M440.8 97.9h4l-2.0 2.2z" fill="#555"/><path d="M478.3 77V61a3.1 2.4 0 0 1 6.2 0V77z" fill="#4a80c4"/><rect x="480.6" y="59" width="1.4" height="18" fill="#8fb4e0"/>
<path d="M486.1 67V58a3.5 2.5 0 0 1 7 0V67z" fill="#eec07a"/><rect x="488.9" y="55.6" width="1.4" height="11.4" fill="#f7dcae"/>
<path d="M494.2 77V61a3.4 2.4 0 0 1 6.8 0V77z" fill="#a0a0a0"/><rect x="496.8" y="59" width="1.4" height="18" fill="#c8c8c8"/>
<circle cx="489.6" cy="71.1" r="5.6" fill="#fff" stroke="#666" stroke-width="0.9"/>
<ellipse cx="489.6" cy="71.1" rx="2.5" ry="5.6" fill="none" stroke="#666" stroke-width="0.8"/>
<path d="M484 71.1h11.2M484.6 68.4h10M484.6 73.8h10" stroke="#666" stroke-width="0.75"/><path d="M498.5 99.0h3.6l-1.8 2z" fill="#555"/><path d="M517 54.2v10.5M515.8 55.5h12.4M515.8 63.300000000000004h12.4" stroke="#8a8a8a" stroke-width="0.9" fill="none"/><path d="M518.2 59.900000000000006l1.7-2.4 1.7 2.4 1.7-2.4 1.7 2.4 1.7-2.4 1.3 1.6" fill="none" stroke="#3e7cc2" stroke-width="0.9"/><path d="M517 72.0v10.5M515.8 73.3h12.4M515.8 81.1h12.4" stroke="#8a8a8a" stroke-width="0.9" fill="none"/><rect x="518.5" y="76.0" width="1.2" height="4" fill="#3e7cc2"/><rect x="520.3" y="74.5" width="1.2" height="5.5" fill="#3e7cc2"/><rect x="522.1" y="77.0" width="1.2" height="3" fill="#3e7cc2"/><rect x="523.9" y="78.0" width="1.2" height="2" fill="#3e7cc2"/><rect x="525.7" y="78.8" width="1.2" height="1.2" fill="#3e7cc2"/><path d="M517 90.5v10.5M515.8 91.8h12.4M515.8 99.6h12.4" stroke="#8a8a8a" stroke-width="0.9" fill="none"/><rect x="518.5" y="93" width="1.5" height="1.5" fill="#3e7cc2"/><rect x="520.8" y="93" width="1.5" height="1.5" fill="#3e7cc2"/><rect x="523.2" y="95.5" width="1.5" height="2" fill="#e03c31"/><rect x="525.5" y="93" width="1.5" height="1.5" fill="#3e7cc2"/><rect x="583.6" y="52.8" width="22.5" height="22" fill="#fbfbfb" stroke="#d2d2d2" stroke-width="1"/>
<rect x="589.6" y="58.5" width="11.8" height="11.4" fill="#fff" stroke="#666" stroke-width="1"/>
<rect x="589.6" y="58.5" width="11.8" height="1.8" fill="#666"/>
<path d="M591 61.6h9M591 65h3.5M591 67.8h3.5" stroke="#3e7cc2" stroke-width="1"/>
<path d="M594.6 63.2h6l-2.2 2.6v3.4l-1.6-0.9v-2.5z" fill="#555"/><path d="M593.4 96.5h3.4l-1.7 2z" fill="#555"/><circle cx="630.1" cy="64.6" r="9.3" fill="none" stroke="#8a8a8a" stroke-width="0.9"/>
<ellipse cx="630.1" cy="64.6" rx="4.3" ry="9.3" fill="none" stroke="#8a8a8a" stroke-width="0.9"/>
<path d="M630.1 55.3v18.6M621.6 61h17M621.6 68.2h17" stroke="#8a8a8a" stroke-width="0.9"/>
<path d="M627.5 70.6h19v10h-19z" fill="#f3f3f3"/>
<g fill="none" stroke="#3e7cc2" stroke-width="2"><rect x="629.8" y="72.6" width="8.4" height="5.6" rx="2.8" transform="rotate(-12 634 75.4)"/><rect x="635.6" y="72.2" width="8.4" height="5.6" rx="2.8" transform="rotate(-12 639.8 75)"/></g><path d="M630.0999999999999 98.5h3.4l-1.7 2z" fill="#555"/><rect x="657.8" y="52.8" width="22.5" height="22" fill="#fbfbfb" stroke="#d2d2d2" stroke-width="1"/>
<path d="M665.6 66.2c1.8-0.6 3.8-3.8 5.7-6.2h0.9l0.9 8.6" fill="none" stroke="#3e7cc2" stroke-width="1.9" stroke-linecap="round" stroke-linejoin="round"/><path d="M668.2 65.3h4.2" stroke="#3e7cc2" stroke-width="1.4"/><path d="M667.5 96.5h3.4l-1.7 2z" fill="#555"/><rect x="695.2" y="52.8" width="22.5" height="22" fill="#fbfbfb" stroke="#d2d2d2" stroke-width="1"/>
<path d="M702.2 67.9h3.4v-1.2c-1.9-0.9-2.8-2.4-2.8-4c0-2.4 1.9-3.6 4.4-3.6s4.4 1.2 4.4 3.6c0 1.6-0.9 3.1-2.8 4v1.2h3.4" fill="none" stroke="#3e7cc2" stroke-width="1.9"/><path d="M704.8 96.5h3.4l-1.7 2z" fill="#555"/><path d="M461.5 112.5h3.5v3.5M463 114.5l2 2" fill="none" stroke="#777" stroke-width="0.8"/><path d="M753.8 116.6l3.4-3.2 3.4 3.2" fill="none" stroke="#555" stroke-width="1.4"/></svg>
<svg style="left:0;top:0" width="768" height="523" viewBox="0 0 768 523"><path d="M70 137.3h6l-3 2.9z" fill="#555"/>
<circle cx="92.8" cy="136" r="0.7" fill="#999"/><circle cx="92.8" cy="139.7" r="0.7" fill="#999"/><circle cx="92.8" cy="143.3" r="0.7" fill="#999"/>
<path d="M116 136.6l7.2 7.2M123.2 136.6l-7.2 7.2" stroke="#b4b4b4" stroke-width="1"/>
<path d="M143.3 140.2l3 3.5 6-7.2" fill="none" stroke="#b4b4b4" stroke-width="1.2"/>
<text x="171.3" y="143.6" font-family="Liberation Serif" font-style="italic" font-size="10.5" fill="#555">f</text>
<text x="175.2" y="143.8" font-family="Liberation Serif" font-style="italic" font-size="8" fill="#555">x</text>
<path d="M755.5 137.8l2.8 2.6 2.8-2.6" fill="none" stroke="#555" stroke-width="1.1"/>
<path d="M15.1 160.9v8.9h-8.9z" fill="#b8b8b8"/>
</svg>
<svg style="left:0;top:0" width="768" height="523" viewBox="0 0 768 523"><path d="M21.2 493.2v4.8l-2.6-2.4z" fill="#c4c4c4"/>
<path d="M41.6 493.2v4.8l2.6-2.4z" fill="#c4c4c4"/>
<circle cx="158.3" cy="496" r="5.6" fill="none" stroke="#666" stroke-width="1"/>
<path d="M158.3 492.8v6.4M155.1 496h6.4" stroke="#666" stroke-width="1.1"/>
<circle cx="461.4" cy="492.8" r="0.6" fill="#aaa"/><circle cx="461.4" cy="496" r="0.6" fill="#aaa"/><circle cx="461.4" cy="499.2" r="0.6" fill="#aaa"/>
<path d="M481.8 493.6v5.4l-3.2-2.7z" fill="#555"/>
<path d="M746.6 493.6v5.4l3.2-2.7z" fill="#555"/>
<path d="M757.6 166.6h6l-3-3.2z" fill="#666"/>
<path d="M757.6 478.4h6l-3 3.2z" fill="#666"/>
<rect x="43.5" y="511" width="3" height="3" rx="1.5" fill="#666"/>
<rect x="43.3" y="513.5" width="9.7" height="6.8" fill="#fff" stroke="#777" stroke-width="0.9"/>
<path d="M45.2 515.5h1M47.6 515.5h1M50 515.5h1M45.2 517.5h1M47.6 517.5h1M50 517.5h1" stroke="#777" stroke-width="1"/>
<rect x="546.5" y="510.5" width="10" height="10" fill="none" stroke="#888" stroke-width="0.9"/>
<path d="M549 510.5v10M551.5 510.5v10M554 510.5v10M546.5 513h10M546.5 515.5h10M546.5 518h10" stroke="#888" stroke-width="0.8"/>
<rect x="576.3" y="510.5" width="10.2" height="10" fill="none" stroke="#777" stroke-width="0.9"/>
<rect x="578.6" y="512.8" width="5.6" height="5.4" fill="none" stroke="#777" stroke-width="0.9"/>
<path d="M579.8 515.5h3.2" stroke="#777" stroke-width="0.8"/>
<path d="M606.3 510.5v10h10v-10M609.5 510.5v5.5h3.2v-5.5" fill="none" stroke="#777" stroke-width="0.9"/>
<path d="M629.5 516.2h4.9" stroke="#555" stroke-width="1.4"/>
<path d="M718.3 516.2h5.7M721.15 513.4v5.7" stroke="#555" stroke-width="1.4"/>
</svg>
<svg style="left:0;top:0" width="768" height="523" viewBox="0 0 768 523"><path d="M229.6 139.3v13.2l3-2.9 2.1 4.7 2-0.9-2.1-4.5h4.2z" fill="#fff" stroke="#222" stroke-width="0.9" stroke-linejoin="round"/></svg>
</body></html>
